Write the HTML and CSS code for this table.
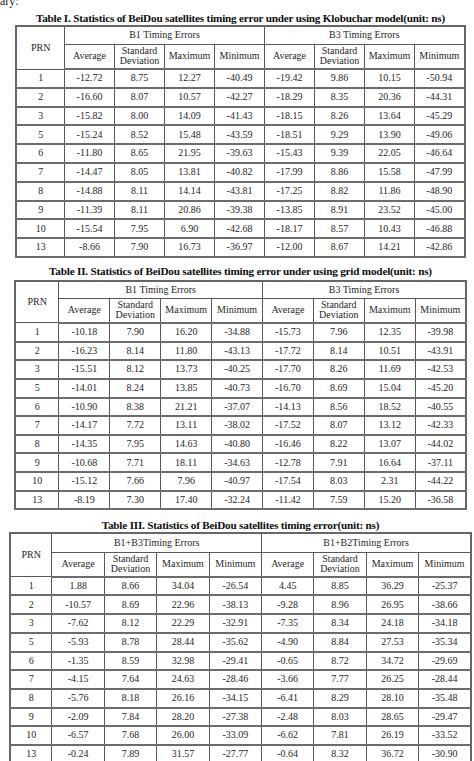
FILE: index.html
```html
<!DOCTYPE html>
<html>
<head>
<meta charset="utf-8">
<link rel="stylesheet" href="styles.css">
</head>
<body>
<div class="cut"><div class="cut-text">ary:</div></div>
<div class="page">
  <div class="title title-1">Table I. Statistics of BeiDou satellites timing error under using Klobuchar model(unit: ns)</div>
  <table class="tbl t1">
    <colgroup><col class="c-prn"><col span="8" class="c-val"></colgroup>
    <thead>
      <tr class="h1"><th rowspan="2">PRN</th><th colspan="4">B1 Timing Errors</th><th colspan="4">B3 Timing Errors</th></tr>
      <tr class="h2"><th>Average</th><th>Standard<br>Deviation</th><th>Maximum</th><th>Minimum</th><th>Average</th><th>Standard<br>Deviation</th><th>Maximum</th><th>Minimum</th></tr>
    </thead>
    <tbody>
      <tr><td>1</td><td>-12.72</td><td>8.75</td><td>12.27</td><td>-40.49</td><td>-19.42</td><td>9.86</td><td>10.15</td><td>-50.94</td></tr>
      <tr><td>2</td><td>-16.60</td><td>8.07</td><td>10.57</td><td>-42.27</td><td>-18.29</td><td>8.35</td><td>20.36</td><td>-44.31</td></tr>
      <tr><td>3</td><td>-15.82</td><td>8.00</td><td>14.09</td><td>-41.43</td><td>-18.15</td><td>8.26</td><td>13.64</td><td>-45.29</td></tr>
      <tr><td>5</td><td>-15.24</td><td>8.52</td><td>15.48</td><td>-43.59</td><td>-18.51</td><td>9.29</td><td>13.90</td><td>-49.06</td></tr>
      <tr><td>6</td><td>-11.80</td><td>8.65</td><td>21.95</td><td>-39.63</td><td>-15.43</td><td>9.39</td><td>22.05</td><td>-46.64</td></tr>
      <tr><td>7</td><td>-14.47</td><td>8.05</td><td>13.81</td><td>-40.82</td><td>-17.99</td><td>8.86</td><td>15.58</td><td>-47.99</td></tr>
      <tr><td>8</td><td>-14.88</td><td>8.11</td><td>14.14</td><td>-43.81</td><td>-17.25</td><td>8.82</td><td>11.86</td><td>-48.90</td></tr>
      <tr><td>9</td><td>-11.39</td><td>8.11</td><td>20.86</td><td>-39.38</td><td>-13.85</td><td>8.91</td><td>23.52</td><td>-45.00</td></tr>
      <tr><td>10</td><td>-15.54</td><td>7.95</td><td>6.90</td><td>-42.68</td><td>-18.17</td><td>8.57</td><td>10.43</td><td>-46.88</td></tr>
      <tr><td>13</td><td>-8.66</td><td>7.90</td><td>16.73</td><td>-36.97</td><td>-12.00</td><td>8.67</td><td>14.21</td><td>-42.86</td></tr>
    </tbody>
  </table>

  <div class="title title-2">Table II. Statistics of BeiDou satellites timing error under using grid model(unit: ns)</div>
  <table class="tbl t2">
    <colgroup><col class="c-prn"><col span="8" class="c-val"></colgroup>
    <thead>
      <tr class="h1"><th rowspan="2">PRN</th><th colspan="4">B1 Timing Errors</th><th colspan="4">B3 Timing Errors</th></tr>
      <tr class="h2"><th>Average</th><th>Standard<br>Deviation</th><th>Maximum</th><th>Minimum</th><th>Average</th><th>Standard<br>Deviation</th><th>Maximum</th><th>Minimum</th></tr>
    </thead>
    <tbody>
      <tr><td>1</td><td>-10.18</td><td>7.90</td><td>16.20</td><td>-34.88</td><td>-15.73</td><td>7.96</td><td>12.35</td><td>-39.98</td></tr>
      <tr><td>2</td><td>-16.23</td><td>8.14</td><td>11.80</td><td>-43.13</td><td>-17.72</td><td>8.14</td><td>10.51</td><td>-43.91</td></tr>
      <tr><td>3</td><td>-15.51</td><td>8.12</td><td>13.73</td><td>-40.25</td><td>-17.70</td><td>8.26</td><td>11.69</td><td>-42.53</td></tr>
      <tr><td>5</td><td>-14.01</td><td>8.24</td><td>13.85</td><td>-40.73</td><td>-16.70</td><td>8.69</td><td>15.04</td><td>-45.20</td></tr>
      <tr><td>6</td><td>-10.90</td><td>8.38</td><td>21.21</td><td>-37.07</td><td>-14.13</td><td>8.56</td><td>18.52</td><td>-40.55</td></tr>
      <tr><td>7</td><td>-14.17</td><td>7.72</td><td>13.11</td><td>-38.02</td><td>-17.52</td><td>8.07</td><td>13.12</td><td>-42.33</td></tr>
      <tr><td>8</td><td>-14.35</td><td>7.95</td><td>14.63</td><td>-40.80</td><td>-16.46</td><td>8.22</td><td>13.07</td><td>-44.02</td></tr>
      <tr><td>9</td><td>-10.68</td><td>7.71</td><td>18.11</td><td>-34.63</td><td>-12.78</td><td>7.91</td><td>16.64</td><td>-37.11</td></tr>
      <tr><td>10</td><td>-15.12</td><td>7.66</td><td>7.96</td><td>-40.97</td><td>-17.54</td><td>8.03</td><td>2.31</td><td>-44.22</td></tr>
      <tr><td>13</td><td>-8.19</td><td>7.30</td><td>17.40</td><td>-32.24</td><td>-11.42</td><td>7.59</td><td>15.20</td><td>-36.58</td></tr>
    </tbody>
  </table>

  <div class="title title-3">Table III. Statistics of BeiDou satellites timing error(unit: ns)</div>
  <table class="tbl t3">
    <colgroup><col class="c-prn"><col span="8" class="c-val"></colgroup>
    <thead>
      <tr class="h1"><th rowspan="2">PRN</th><th colspan="4">B1+B3Timing Errors</th><th colspan="4">B1+B2Timing Errors</th></tr>
      <tr class="h2"><th>Average</th><th>Standard<br>Deviation</th><th>Maximum</th><th>Minimum</th><th>Average</th><th>Standard<br>Deviation</th><th>Maximum</th><th>Minimum</th></tr>
    </thead>
    <tbody>
      <tr><td>1</td><td>1.88</td><td>8.66</td><td>34.04</td><td>-26.54</td><td>4.45</td><td>8.85</td><td>36.29</td><td>-25.37</td></tr>
      <tr><td>2</td><td>-10.57</td><td>8.69</td><td>22.96</td><td>-38.13</td><td>-9.28</td><td>8.96</td><td>26.95</td><td>-38.66</td></tr>
      <tr><td>3</td><td>-7.62</td><td>8.12</td><td>22.29</td><td>-32.91</td><td>-7.35</td><td>8.34</td><td>24.18</td><td>-34.18</td></tr>
      <tr><td>5</td><td>-5.93</td><td>8.78</td><td>28.44</td><td>-35.62</td><td>-4.90</td><td>8.84</td><td>27.53</td><td>-35.34</td></tr>
      <tr><td>6</td><td>-1.35</td><td>8.59</td><td>32.98</td><td>-29.41</td><td>-0.65</td><td>8.72</td><td>34.72</td><td>-29.69</td></tr>
      <tr><td>7</td><td>-4.15</td><td>7.64</td><td>24.63</td><td>-28.46</td><td>-3.66</td><td>7.77</td><td>26.25</td><td>-28.44</td></tr>
      <tr><td>8</td><td>-5.76</td><td>8.18</td><td>26.16</td><td>-34.15</td><td>-6.41</td><td>8.29</td><td>28.10</td><td>-35.48</td></tr>
      <tr><td>9</td><td>-2.09</td><td>7.84</td><td>28.20</td><td>-27.38</td><td>-2.48</td><td>8.03</td><td>28.65</td><td>-29.47</td></tr>
      <tr><td>10</td><td>-6.57</td><td>7.68</td><td>26.00</td><td>-33.09</td><td>-6.62</td><td>7.81</td><td>26.19</td><td>-33.52</td></tr>
      <tr><td>13</td><td>-0.24</td><td>7.89</td><td>31.57</td><td>-27.77</td><td>-0.64</td><td>8.32</td><td>36.72</td><td>-30.90</td></tr>
    </tbody>
  </table>
</div>
</body>
</html>
```
FILE: styles.css
```css
html, body {
  margin: 0;
  padding: 0;
  background: #ffffff;
}
body {
  font-family: "Liberation Serif", "Times New Roman", serif;
  color: #222222;
  overflow: hidden;
}
.cut {
  height: 8px;
  overflow: hidden;
}
.cut-text {
  margin-top: -5px;
  font-size: 12px;
  line-height: 13px;
  color: #1a1a1a;
}
.page {
  margin-left: 7px;
  width: 467px;
}
.title {
  text-align: center;
  font-weight: bold;
  font-size: 11.2px;
  letter-spacing: -0.2px;
  line-height: 13px;
  color: #0e0e0e;
  white-space: nowrap;
}
.title-1 { margin: 4px 0 0; }
.title-2 { margin: 7.5px 0 2px; }
.title-3 { margin: 9px 0 0; }

.tbl {
  border-collapse: collapse;
  table-layout: fixed;
  margin: 0 auto;
  font-size: 10px;
  text-align: center;
  color: #262626;
  border: 2px solid #666666;
}
.tbl th,
.tbl td {
  border: 1px solid #585858;
  padding: 0;
  font-weight: normal;
  line-height: 10.3px;
  vertical-align: middle;
  overflow: hidden;
  white-space: nowrap;
}
.tbl tbody td {
  border-bottom: 2px solid #6c6c6c;
}
.tbl .h2 th {
  border-bottom: 2px solid #6c6c6c;
}
.t1 { width: 449px; }
.t1 .c-prn { width: 48px; }
.t1 .c-val { width: 50px; }
.t1 .h1 { height: 18px; }
.t1 .h2 { height: 25px; }
.t1 tbody tr { height: 18.8px; }

.t2 { width: 451px; }
.t2 .c-prn { width: 44px; }
.t2 .c-val { width: 50.9px; }
.t2 .h1 { height: 17px; }
.t2 .h2 { height: 24.5px; }
.t2 tbody tr { height: 18.65px; }

.t3 { width: 461px; }
.t3 .c-prn { width: 42px; }
.t3 .c-val { width: 52.4px; }
.t3 .h1 { height: 19px; }
.t3 .h2 { height: 24.4px; }
.t3 tbody tr { height: 18.7px; }
```
